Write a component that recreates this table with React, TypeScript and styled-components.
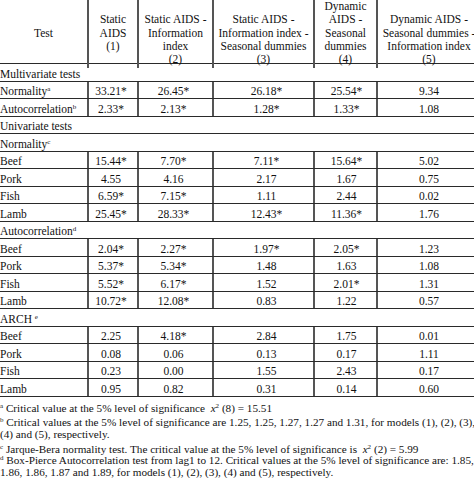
import React from 'react';
import styled, { createGlobalStyle } from 'styled-components';

const Global = createGlobalStyle`
  html, body { margin: 0; padding: 0; background: #fff; overflow: hidden; }
  body { font-family: "Liberation Serif", "Times New Roman", serif; color: #121212; }
`;

const COLS = '89px 50px 75px 101px 63px 102px';
const LINE_V = '2px solid #555';
const LINE_H = '1px solid #2a2a2a';
const SHIFT = [-2, -2, 3, 1, 0];

const Page = styled.div`
  width: 480px;
`;

const HeaderRow = styled.div`
  display: grid;
  grid-template-columns: ${COLS};
  height: 64px;
  border-bottom: ${LINE_H};
  box-sizing: border-box;
`;

const HeaderCell = styled.div<{ $pad?: boolean; $last?: boolean }>`
  display: flex;
  flex-direction: column;
  justify-content: center;
  align-items: center;
  text-align: center;
  font-size: 11.5px;
  line-height: 13.3px;
  padding-top: ${(p) => (p.$pad ? '13.3px' : '0')};
  padding-bottom: 2px;
  box-sizing: border-box;
  border-right: ${(p) => (p.$last ? 'none' : LINE_V)};
  white-space: nowrap;
`;

const Row = styled.div`
  display: grid;
  grid-template-columns: ${COLS};
  height: 17.5px;
  border-bottom: ${LINE_H};
  box-sizing: border-box;
  font-size: 11.5px;
`;

const SectionRow = styled.div`
  display: flex;
  align-items: flex-end;
  height: 17.5px;
  border-bottom: ${LINE_H};
  box-sizing: border-box;
  font-size: 11.5px;
  line-height: 12.8px;
  white-space: nowrap;
`;

const Label = styled.div`
  display: flex;
  align-items: flex-end;
  line-height: 12.8px;
  border-right: ${LINE_V};
  white-space: nowrap;
`;

const Value = styled.div<{ $dx: number; $last?: boolean }>`
  display: flex;
  align-items: flex-end;
  justify-content: center;
  line-height: 12.8px;
  white-space: nowrap;
  padding-left: ${(p) => (p.$dx > 0 ? p.$dx * 2 : 0)}px;
  padding-right: ${(p) => (p.$dx < 0 ? -p.$dx * 2 : 0)}px;
  border-right: ${(p) => (p.$last ? 'none' : LINE_V)};
`;

const Sup = styled.sup`
  font-size: 7px;
  line-height: 0;
  vertical-align: 4px;
`;

const Notes = styled.div`
  font-size: 11.2px;
  line-height: 12px;
  padding-top: 5px;
`;

const Note = styled.div<{ $mt: number }>`
  margin-top: ${(p) => p.$mt}px;
  white-space: nowrap;
`;

const X = styled.i`
  font-style: italic;
`;

type DataRow = { label: string; sup?: string; values: string[] };
type Item = { section: string; sup?: string; space?: boolean } | DataRow;

const items: Item[] = [
  { section: 'Multivariate tests' },
  { label: 'Normality', sup: 'a', values: ['33.21*', '26.45*', '26.18*', '25.54*', '9.34'] },
  { label: 'Autocorrelation', sup: 'b', values: ['2.33*', '2.13*', '1.28*', '1.33*', '1.08'] },
  { section: 'Univariate tests' },
  { section: 'Normality', sup: 'c' },
  { label: 'Beef', values: ['15.44*', '7.70*', '7.11*', '15.64*', '5.02'] },
  { label: 'Pork', values: ['4.55', '4.16', '2.17', '1.67', '0.75'] },
  { label: 'Fish', values: ['6.59*', '7.15*', '1.11', '2.44', '0.02'] },
  { label: 'Lamb', values: ['25.45*', '28.33*', '12.43*', '11.36*', '1.76'] },
  { section: 'Autocorrelation', sup: 'd' },
  { label: 'Beef', values: ['2.04*', '2.27*', '1.97*', '2.05*', '1.23'] },
  { label: 'Pork', values: ['5.37*', '5.34*', '1.48', '1.63', '1.08'] },
  { label: 'Fish', values: ['5.52*', '6.17*', '1.52', '2.01*', '1.31'] },
  { label: 'Lamb', values: ['10.72*', '12.08*', '0.83', '1.22', '0.57'] },
  { section: 'ARCH', sup: 'e', space: true },
  { label: 'Beef', values: ['2.25', '4.18*', '2.84', '1.75', '0.01'] },
  { label: 'Pork', values: ['0.08', '0.06', '0.13', '0.17', '1.11'] },
  { label: 'Fish', values: ['0.23', '0.00', '1.55', '2.43', '0.17'] },
  { label: 'Lamb', values: ['0.95', '0.82', '0.31', '0.14', '0.60'] },
];

const headers: { lines: string[]; pad?: boolean }[] = [
  { lines: ['Static', 'AIDS', '(1)'] },
  { lines: ['Static AIDS -', 'Information', 'index', '(2)'], pad: true },
  { lines: ['Static AIDS -', 'Information index -', 'Seasonal dummies', '(3)'], pad: true },
  { lines: ['Dynamic', 'AIDS -', 'Seasonal', 'dummies', '(4)'] },
  { lines: ['Dynamic AIDS -', 'Seasonal dummies -', 'Information index', '(5)'], pad: true },
];

export default function App() {
  return (
    <Page>
      <Global />
      <HeaderRow>
        <HeaderCell>
          <span>Test</span>
        </HeaderCell>
        {headers.map((h, i) => (
          <HeaderCell key={i} $pad={h.pad} $last={i === headers.length - 1}>
            {h.lines.map((l, j) => (
              <span key={j}>{l}</span>
            ))}
          </HeaderCell>
        ))}
      </HeaderRow>
      {items.map((it, i) =>
        'section' in it ? (
          <SectionRow key={i}>
            <span>
              {it.section}
              {it.sup ? (
                <>
                  {it.space ? ' ' : ''}
                  <Sup>{it.sup}</Sup>
                </>
              ) : null}
            </span>
          </SectionRow>
        ) : (
          <Row key={i}>
            <Label>
              <span>
                {it.label}
                {it.sup ? <Sup>{it.sup}</Sup> : null}
              </span>
            </Label>
            {it.values.map((v, j) => (
              <Value key={j} $dx={SHIFT[j]} $last={j === it.values.length - 1}>
                {v}
              </Value>
            ))}
          </Row>
        )
      )}
      <Notes>
        <Note $mt={0}>
          <Sup>a</Sup> Critical value at the 5% level of significance&nbsp; <X>x</X>
          <Sup>2</Sup> (8) = 15.51
        </Note>
        <Note $mt={2}>
          <Sup>b</Sup> Critical values at the 5% level of significance are 1.25, 1.25, 1.27, 1.27 and 1.31, for models (1), (2), (3),
          <br />
          (4) and (5), respectively.
        </Note>
        <Note $mt={3}>
          <Sup>c</Sup> Jarque-Bera normality test. The critical value at the 5% level of significance is&nbsp; <X>x</X>
          <Sup>2</Sup> (2) = 5.99
        </Note>
        <Note $mt={-1}>
          <Sup>d</Sup> Box-Pierce Autocorrelation test from lag1 to 12. Critical values at the 5% level of significance are: 1.85,
          <br />
          1.86, 1.86, 1.87 and 1.89, for models (1), (2), (3), (4) and (5), respectively.
        </Note>
      </Notes>
    </Page>
  );
}
